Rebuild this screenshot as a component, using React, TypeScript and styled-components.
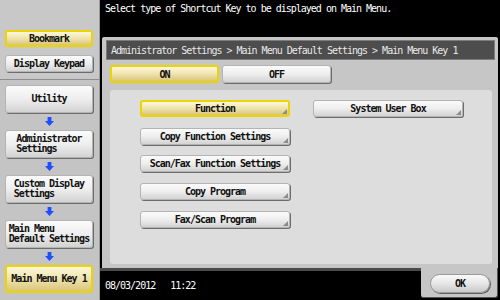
import React from 'react';
import styled, { createGlobalStyle, css } from 'styled-components';

const Global = createGlobalStyle`
  html, body { margin: 0; padding: 0; background: #000; }
  body { width: 500px; height: 300px; overflow: hidden; }
`;

const FONT = `"DejaVu Sans Mono", "Liberation Mono", monospace`;

const textStyle = css`
  font-size: 10px;
  letter-spacing: -1px;
`;

const yellowSkin = css`
  background: linear-gradient(#fcf7dc, #efe3ac 50%, #d9c57a);
  border: 2px solid #ecd400;
`;

const graySkin = css`
  background: linear-gradient(#fbfbfb, #eeeeee 50%, #d3d3d3);
  border: 1px solid #b4b4b4;
  box-shadow: 1px 1px 0 #6c6c6c;
`;

const Screen = styled.div`
  display: flex;
  width: 500px;
  height: 300px;
  font-family: ${FONT};
  background: #000;
`;

const Sidebar = styled.div`
  width: 99px;
  border-right: 1px solid #9a9a9a;
  background: #c4c4c4;
  display: flex;
  flex-direction: column;
`;

const SideTop = styled.div`
  height: 80px;
  box-sizing: border-box;
  padding-top: 30px;
  display: flex;
  flex-direction: column;
  gap: 8px;
  background: #c8c8c8;
  border-bottom: 1px solid #8e8e8e;
`;

const SideBottom = styled.div`
  display: flex;
  flex-direction: column;
  padding-top: 5px;
`;

const SideButton = styled.div<{ $h: number; $selected?: boolean }>`
  width: 88px;
  height: ${(p) => p.$h}px;
  margin-left: 5px;
  box-sizing: border-box;
  border-radius: 3px;
  display: flex;
  align-items: center;
  justify-content: center;
  font-weight: bold;
  ${textStyle}
  line-height: 10px;
  color: #111;
  ${(p) => (p.$selected ? yellowSkin : graySkin)}
`;

const Label = styled.span`
  text-align: left;
  white-space: pre;
`;

const ArrowSlot = styled.div`
  height: 17px;
  display: flex;
  align-items: center;
  justify-content: center;
`;

const Arrow = () => (
  <ArrowSlot>
    <svg width="9" height="9" viewBox="0 0 9 9">
      <path d="M2.6 0H6.4V4H9L4.5 9L0 4H2.6Z" fill="#1f4dff" />
    </svg>
  </ArrowSlot>
);

const Main = styled.div`
  width: 400px;
  display: flex;
  flex-direction: column;
`;

const Message = styled.div`
  height: 37px;
  box-sizing: border-box;
  padding: 4px 0 0 5px;
  color: #fff;
  ${textStyle}
  line-height: 10px;
  white-space: pre;
`;

const Panel = styled.div`
  flex: 1;
  margin: 0 2px;
  background: #c6c6c6;
  padding: 3px 3px 4px 4px;
  display: flex;
  flex-direction: column;
  border-radius: 2px 2px 0 0;
`;

const Header = styled.div`
  height: 20px;
  box-sizing: border-box;
  background: #4d4d4d;
  border: 1px solid #7c7c7c;
  color: #e8e8e8;
  ${textStyle}
  padding-left: 4px;
  display: flex;
  align-items: center;
  white-space: pre;
`;

const ToggleRow = styled.div`
  margin-top: 5px;
  padding-left: 4px;
  display: flex;
  gap: 3px;
`;

const ToggleButton = styled.div<{ $selected?: boolean }>`
  width: 109px;
  height: 18px;
  box-sizing: border-box;
  border-radius: 3px;
  display: flex;
  align-items: center;
  justify-content: center;
  font-weight: bold;
  ${textStyle}
  color: #111;
  ${(p) => (p.$selected ? yellowSkin : graySkin)}
`;

const ContentBox = styled.div`
  flex: 1;
  margin: 7px 3px 0 4px;
  background: #dddddd;
  border-radius: 3px;
  padding: 10px 0 0 30px;
  display: grid;
  grid-template-columns: 150px 150px;
  grid-template-rows: repeat(5, 17px);
  grid-auto-flow: column;
  column-gap: 23px;
  row-gap: 10.7px;
  align-content: start;
`;

const FuncButton = styled.div<{ $selected?: boolean }>`
  position: relative;
  box-sizing: border-box;
  border-radius: 3px;
  display: flex;
  align-items: center;
  justify-content: center;
  font-weight: bold;
  ${textStyle}
  color: #111;
  ${(p) => (p.$selected ? yellowSkin : graySkin)}
  &::after {
    content: '';
    position: absolute;
    right: 1px;
    bottom: 1px;
    width: 0;
    height: 0;
    border-left: 5px solid transparent;
    border-bottom: 5px solid #8c8c8c;
  }
`;

const Footer = styled.div`
  height: 32px;
  display: flex;
  padding-right: 2px;
`;

const DateArea = styled.div`
  flex: 1;
  border-top: 3px solid #4a4a4a;
  color: #fff;
  ${textStyle}
  padding: 9px 0 0 5px;
  white-space: pre;
`;

const OKTab = styled.div`
  width: 77px;
  height: 30px;
  box-sizing: border-box;
  background: #c6c6c6;
  border-right: 1px solid #555;
  border-bottom: 1px solid #555;
  border-radius: 0 0 3px 3px;
  padding: 6px 0 0 9px;
`;

const OKButton = styled.div`
  width: 60px;
  height: 19px;
  box-sizing: border-box;
  border-radius: 10px;
  background: linear-gradient(#fafafa, #e6e6e6 50%, #c9c9c9);
  border: 1px solid #9a9a9a;
  box-shadow: 1px 1px 0 #606060;
  display: flex;
  align-items: center;
  justify-content: center;
  font-weight: bold;
  ${textStyle}
  color: #111;
`;

export default function App() {
  return (
    <>
      <Global />
      <Screen>
        <Sidebar>
          <SideTop>
            <SideButton $h={17} $selected>
              <Label>Bookmark</Label>
            </SideButton>
            <SideButton $h={17}>
              <Label>Display Keypad</Label>
            </SideButton>
          </SideTop>
          <SideBottom>
            <SideButton $h={28}>
              <Label>Utility</Label>
            </SideButton>
            <Arrow />
            <SideButton $h={28}>
              <Label>{'Administrator\nSettings'}</Label>
            </SideButton>
            <Arrow />
            <SideButton $h={28}>
              <Label>{'Custom Display\nSettings'}</Label>
            </SideButton>
            <Arrow />
            <SideButton $h={28}>
              <Label>{'Main Menu\nDefault Settings'}</Label>
            </SideButton>
            <Arrow />
            <SideButton $h={28} $selected>
              <Label>Main Menu Key 1</Label>
            </SideButton>
          </SideBottom>
        </Sidebar>
        <Main>
          <Message>Select type of Shortcut Key to be displayed on Main Menu.</Message>
          <Panel>
            <Header>Administrator Settings &gt; Main Menu Default Settings &gt; Main Menu Key 1</Header>
            <ToggleRow>
              <ToggleButton $selected>ON</ToggleButton>
              <ToggleButton>OFF</ToggleButton>
            </ToggleRow>
            <ContentBox>
              <FuncButton $selected>Function</FuncButton>
              <FuncButton>Copy Function Settings</FuncButton>
              <FuncButton>Scan/Fax Function Settings</FuncButton>
              <FuncButton>Copy Program</FuncButton>
              <FuncButton>Fax/Scan Program</FuncButton>
              <FuncButton>System User Box</FuncButton>
            </ContentBox>
          </Panel>
          <Footer>
            <DateArea>{'08/03/2012   11:22'}</DateArea>
            <OKTab>
              <OKButton>OK</OKButton>
            </OKTab>
          </Footer>
        </Main>
      </Screen>
    </>
  );
}
